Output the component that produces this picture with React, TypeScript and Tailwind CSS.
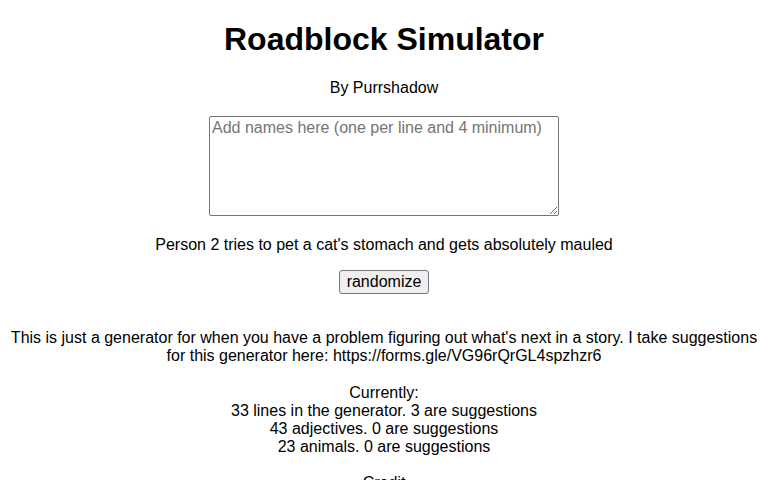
import { useState } from "react";

const lines = [
  "Person 2 tries to pet a cat's stomach and gets absolutely mauled",
  "Person 1 trips over a sleeping dog and falls into a pond",
  "Person 3 and Person 4 argue about who ate the last sandwich",
];

const App = () => {
  const [names, setNames] = useState("");
  const [line, setLine] = useState(0);

  const randomize = () => {
    setLine(prev => (prev + 1) % lines.length);
  };

  return (
    <div className="min-h-screen bg-white px-2 text-center font-['Liberation_Sans',Arial,sans-serif] text-[16px] leading-[18px] text-black">
      <h1 className="pt-[21px] text-[32px] font-bold leading-[37px]">Roadblock Simulator</h1>
      <p className="mt-[21px]">By Purrshadow</p>

      {/* names box */}
      <textarea
        value={names}
        onChange={e => setNames(e.target.value)}
        placeholder="Add names here (one per line and 4 minimum)"
        className="mx-auto mt-[19px] block h-[100px] w-[350px] resize rounded-[2px] border border-[#767676] px-[2px] py-[2px] text-[16px] leading-[18px] placeholder:text-[#757575]"
      />

      <p className="mt-[20px]">{lines[line]}</p>

      <button
        onClick={randomize}
        className="mt-[16px] h-[24px] rounded-[3px] border border-[#767676] bg-[#efefef] px-[7px] text-[16px] leading-[18px] hover:bg-[#e5e5e5]"
      >
        randomize
      </button>

      {/* about */}
      <p className="mt-[35px]">
        This is just a generator for when you have a problem figuring out what's next in a story. I take suggestions for this generator here: https://forms.gle/VG96rQrGL4spzhzr6
      </p>
      <p className="mt-[19px]">
        Currently:
        <br />
        33 lines in the generator. 3 are suggestions
        <br />
        43 adjectives. 0 are suggestions
        <br />
        23 animals. 0 are suggestions
      </p>
      <p className="mt-[18px]">Credit</p>
    </div>
  );
};

export default App;
